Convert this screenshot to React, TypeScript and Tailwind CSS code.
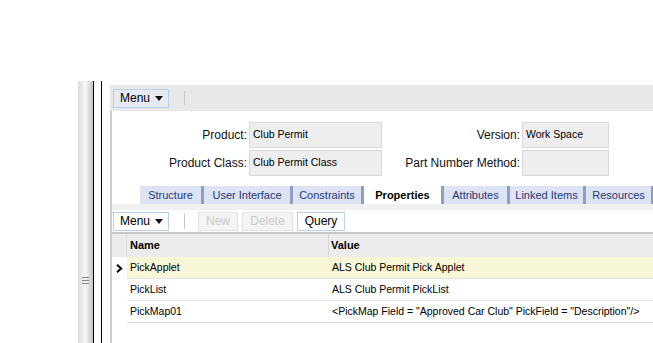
import React from 'react';

const tabs: { label: string; w: string; active?: boolean; first?: boolean }[] = [
  { label: 'Structure', w: 'w-[61px]', first: true },
  { label: 'User Interface', w: 'w-[89px]' },
  { label: 'Constraints', w: 'w-[71px]' },
  { label: 'Properties', w: 'w-[80px]', active: true },
  { label: 'Attributes', w: 'w-[66px]' },
  { label: 'Linked Items', w: 'w-[76px]' },
  { label: 'Resources', w: 'w-[68px]' },
];

const rows = [
  { name: 'PickApplet', value: 'ALS Club Permit Pick Applet', current: true },
  { name: 'PickList', value: 'ALS Club Permit PickList' },
  { name: 'PickMap01', value: '<PickMap Field = "Approved Car Club" PickField = "Description"/>' },
];

const Caret = () => (
  <svg className="ml-[5px] mt-[1px]" width="8" height="5" viewBox="0 0 8 5">
    <path d="M0 0h8L4 5z" fill="#111" />
  </svg>
);

const MenuButton: React.FC<{ bg: string }> = ({ bg }) => (
  <div className={`w-[56px] h-[19px] border border-[#b9cff0] ${bg} flex items-center pl-[6px] text-[12px] text-black`}>
    Menu
    <Caret />
  </div>
);

const Field: React.FC<{ label: string; value?: string; lw: string; iw: string }> = ({ label, value, lw, iw }) => (
  <div className="flex items-center">
    <div className={`${lw} text-right text-[12px] text-[#111]`}>{label}</div>
    <div className={`${iw} ml-[2px] h-[26px] border border-[#d9d9d9] bg-[#eeeeee] flex items-center pl-[3px] text-[10.5px] text-black`}>
      {value}
    </div>
  </div>
);

export default function App() {
  return (
    <div className="w-[653px] h-[343px] bg-white overflow-hidden flex flex-col font-['Liberation_Sans',Arial,sans-serif]">
      <div className="h-[81px] shrink-0" />
      <div className="flex flex-1 min-h-0">
        <div className="w-[78px] shrink-0" />
        {/* splitter */}
        <div className="w-[15px] shrink-0 bg-gradient-to-r from-[#dcdcdc] via-[#f6f6f6] to-[#c4c4c4] flex flex-col items-center pt-[196px]">
          <div className="w-[7px] h-px bg-[#8a8a8a]" />
          <div className="w-[7px] h-px bg-[#8a8a8a] mt-[2px]" />
          <div className="w-[7px] h-px bg-[#8a8a8a] mt-[2px]" />
        </div>
        <div className="w-px shrink-0 bg-black" />
        <div className="w-[7px] shrink-0" />
        <div className="w-px shrink-0 bg-black" />
        <div className="w-[8px] shrink-0" />

        {/* main content */}
        <div className="flex-1 min-w-0 mt-[4px] border-l-2 border-[#cdcdcd] flex flex-col">
          <div className="h-[26px] bg-[#e8e8e8] flex items-center -ml-[2px] pl-[3px]">
            <MenuButton bg="bg-[#e6ebf2]" />
            <div className="ml-[15px] w-px h-[14px] bg-[#c4c4c4]" />
          </div>

          <div className="pt-[11px] flex flex-col gap-[2px]">
            <div className="flex">
              <Field label="Product:" value="Club Permit" lw="w-[135px]" iw="w-[133px]" />
              <Field label="Version:" value="Work Space" lw="w-[138px]" iw="w-[87px]" />
            </div>
            <div className="flex">
              <Field label="Product Class:" value="Club Permit Class" lw="w-[135px]" iw="w-[133px]" />
              <Field label="Part Number Method:" lw="w-[138px]" iw="w-[87px]" />
            </div>
          </div>

          {/* tabs */}
          <div className="mt-[10px] pl-[28px] flex h-[18px]">
            {tabs.map((t) => (
              <div
                key={t.label}
                className={`${t.w} shrink-0 flex items-center justify-center text-[11px] ${
                  t.first ? '' : 'border-l-[3px] border-[#8f9cc3]'
                } ${t.active ? 'bg-white font-bold text-black' : 'bg-[#dde3f2] text-[#1d3a78]'}`}
              >
                {t.label}
              </div>
            ))}
            <div className="w-[3px] shrink-0 bg-[#8f9cc3]" />
          </div>
          <div className="h-[6px] bg-[#f0f0f0]" />

          {/* applet toolbar */}
          <div className="h-[22px] flex items-center pl-[1px]">
            <MenuButton bg="bg-white" />
            <div className="ml-[15px] w-px h-[15px] bg-[#c4c4c4]" />
            <div className="ml-[13px] w-[40px] h-[19px] border border-[#e2e2e2] bg-[#f4f4f4] flex items-center justify-center text-[12px] text-[#c9c9c9]">
              New
            </div>
            <div className="ml-[4px] w-[51px] h-[19px] border border-[#e2e2e2] bg-[#f4f4f4] flex items-center justify-center text-[12px] text-[#c9c9c9]">
              Delete
            </div>
            <div className="ml-[4px] w-[48px] h-[19px] border border-[#bcd0ee] bg-white flex items-center justify-center text-[12px] text-black">
              Query
            </div>
          </div>

          {/* list */}
          <div className="border-t-2 border-[#c6c6c6]">
            <div className="h-[23px] bg-[#ececec] flex text-[11px] font-bold text-black">
              <div className="w-[15px] border-r border-[#dedede]" />
              <div className="w-[202px] border-r border-[#d6d6d6] flex items-center pl-[3px]">Name</div>
              <div className="flex-1 flex items-center pl-[2px]">Value</div>
            </div>
            {rows.map((r) => (
              <div key={r.name} className="h-[22px] flex text-[10.5px] text-black">
                <div className="w-[15px] flex items-center justify-center">
                  {r.current && (
                    <svg width="7" height="9" viewBox="0 0 7 9">
                      <path d="M1 0.8L5.2 4.5 1 8.2" stroke="#000" strokeWidth="2" fill="none" />
                    </svg>
                  )}
                </div>
                <div className={`flex-1 flex border-b border-[#e2e2e2] ${r.current ? 'bg-[#f7f6d6]' : 'bg-white'}`}>
                  <div className="w-[202px] flex items-center pl-[3px]">{r.name}</div>
                  <div className="flex-1 flex items-center pl-[3px] whitespace-nowrap">{r.value}</div>
                </div>
              </div>
            ))}
          </div>
        </div>
      </div>
    </div>
  );
}
